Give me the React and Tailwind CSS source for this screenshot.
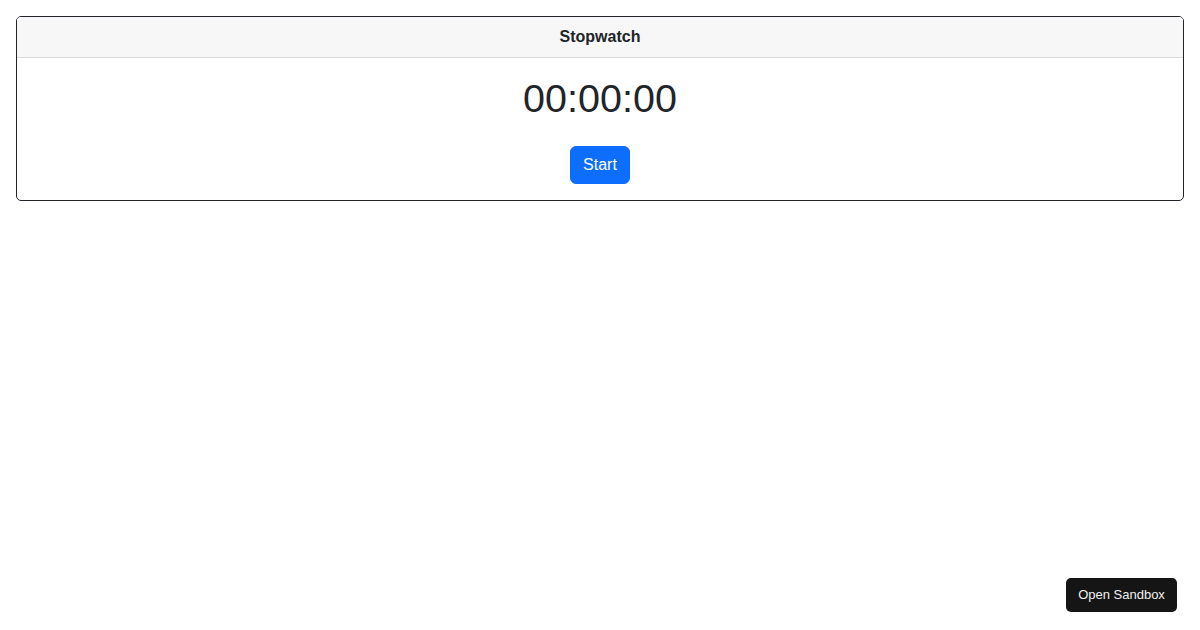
import React, { useState, useEffect } from 'react'

const pad = (n) => String(n).padStart(2, '0')

export default function App() {
  const [running, setRunning] = useState(false)
  const [seconds, setSeconds] = useState(0)

  useEffect(() => {
    if (!running) return
    const id = setInterval(() => setSeconds((s) => s + 1), 1000)
    return () => clearInterval(id)
  }, [running])

  const h = Math.floor(seconds / 3600)
  const m = Math.floor((seconds % 3600) / 60)
  const s = seconds % 60

  return (
    <div
      className="min-h-[630px] bg-white p-4 text-[#212529]"
      style={{ fontFamily: '"Liberation Sans", Arial, sans-serif' }}
    >
      <div className="rounded-[5px] border border-[#212529] overflow-hidden">
        <div className="bg-[#f7f7f7] border-b border-[#d9d9d9] px-4 py-2 text-center text-base leading-6 font-bold">
          Stopwatch
        </div>
        <div className="p-4 flex flex-col items-center">
          <div className="text-[39.5px] leading-[48px] font-light mb-6">
            {pad(h)}:{pad(m)}:{pad(s)}
          </div>
          <button
            onClick={() => setRunning((r) => !r)}
            className="bg-[#0d6efd] text-white border border-[#0d6efd] rounded-[6px] px-3 py-1.5 text-base leading-6"
          >
            {running ? 'Stop' : 'Start'}
          </button>
        </div>
      </div>

      <button className="fixed bottom-[18px] right-[23px] h-[34px] w-[111px] rounded-[5px] bg-[#151515] text-[#f0f0f0] text-[13px]">
        Open Sandbox
      </button>
    </div>
  )
}
